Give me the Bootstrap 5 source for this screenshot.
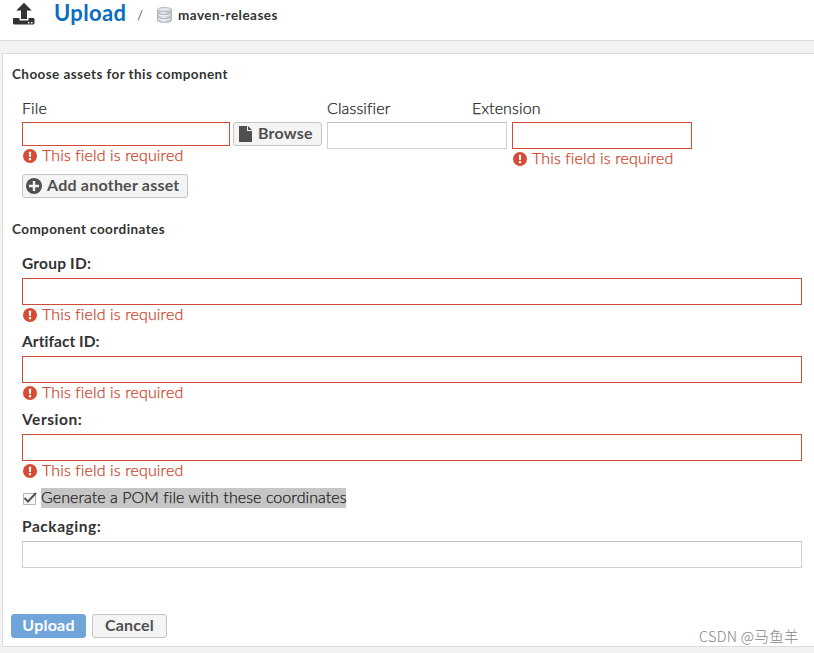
<!DOCTYPE html>
<html lang="en">
<head>
<meta charset="utf-8">
<meta name="viewport" content="width=device-width, initial-scale=1">
<title>Upload</title>
<link href="https://cdn.jsdelivr.net/npm/bootstrap@5.3.0/dist/css/bootstrap.min.css" rel="stylesheet">
<style>
body{background:#f2f2f2;font:300 16px/20px Lato,"Noto Sans CJK SC",sans-serif;letter-spacing:.13px;color:#222;height:653px;overflow:hidden}
.topbar{height:41px;border-bottom:1px solid #dcdcdc;padding-left:12px}
.topbar h1{font:700 22px/26px Lato,sans-serif;letter-spacing:.35px;color:#0b6dc0;width:72px;margin:0 0 0 19px;white-space:nowrap}
.crumb{font:700 13.5px/20px Lato,sans-serif;letter-spacing:.47px;white-space:nowrap;color:#333}
.panel{margin:12px 0 0 2px;height:594px;border:1px solid #dcdcdc;border-right:0;padding:10px 12px 0 9px}
.panel h2{font:700 13.5px/20px Lato,sans-serif;letter-spacing:.42px;margin:0;color:#333}
.fields{padding-left:10px}
.field-label{line-height:18px;padding-bottom:2px;margin:0;display:block}
.field-label:not(.strong),.error span,.selected{-webkit-text-stroke:.25px currentColor}
.field-label.strong{font-weight:700;font-size:15.5px;letter-spacing:.2px;color:#333}
.field-label.wide{letter-spacing:.55px}
.form-control{border:1px solid #d0d0d0;border-top-color:#c0c0c0;border-radius:0;height:27px;min-height:0;padding:2px 6px;font-size:15px}
.form-control.required{border-color:#cf4c35}
.file-input{height:24px;width:208px}
.w180{width:180px}
.error{color:#cc3f28;height:20px;gap:5px;padding-left:1px;white-space:nowrap}
.error span{line-height:18px;padding-bottom:2px}
.btn{height:24px;border:1px solid #c4c4c4;border-radius:3px;background:#f4f4f4;color:#505050;font:700 16px/18px Lato,sans-serif;letter-spacing:.22px;padding:0 0 2px;white-space:nowrap}
.btn svg{position:relative;top:1px}
.btn.upload{width:75px;background:#6fa5d8;border-color:#6fa5d8;color:#fff}
.btn.cancel{width:75px}
.selected{background:#c6c6c6;height:20px;line-height:18px;width:305px;letter-spacing:.07px;white-space:nowrap}
.watermark{position:absolute;left:699px;top:626px;color:#858585;font:300 14.5px/20px "Noto Sans CJK SC",sans-serif;letter-spacing:.3px;white-space:nowrap}
</style>
</head>
<body>
<svg class="d-none">
  <symbol id="alert" viewBox="0 0 14 14"><circle cx="7" cy="7" r="7" fill="#d64b34"/><path d="M5.800 2.700h2.400l-.3 5.300H6.100z M5.900 9h2.200v2.200H5.900z" fill="#fff"/></symbol>
</svg>
<header class="topbar bg-white d-flex">
  <svg class="flex-shrink-0" style="margin-top:2px" width="23" height="23" viewBox="0 0 23 23"><path fill="#333" d="M12 .8l7.700 7.700H15v8.500H9V8.500H4.300zM1 16h6.500v2.500h9V16H21.500l1 1V21.500l-1 1H2l-1-1z"/><path fill="#fff" d="M16 20h1.500v1.500H16zM19 20h1.500v1.500H19z"/></svg>
  <h1>Upload</h1>
  <span class="crumb fw-normal" style="margin:5px 0 0 11px;width:7px;color:#666">/</span>
  <svg class="flex-shrink-0" style="margin:7px 0 0 13px" width="15" height="16" viewBox="0 0 15 16"><defs><linearGradient id="g"><stop stop-color="#b9bfca"/><stop offset=".4" stop-color="#e8ebf0"/><stop offset="1" stop-color="#b2b8c3"/></linearGradient></defs><path d="M.5 2.500v11c0 2.500 14 2.500 14 0v-11z" fill="url(#g)" stroke="#b0b6c0"/><ellipse cx="7.500" cy="2.500" rx="7" ry="2" fill="#e4e7ec" stroke="#b4b9c2"/><path d="M.5 5.800c0 2.300 14 2.300 14 0M.5 10c0 2.300 14 2.300 14 0" fill="none" stroke="#a8aeb9"/><path d="M1 6.800c0 2.300 13 2.300 13 0M1 11c0 2.300 13 2.300 13 0" fill="none" stroke="#f3f5f8"/></svg>
  <span class="crumb" style="margin:5px 0 0 6px">maven-releases</span>
</header>
<main class="panel bg-white">
  <h2>Choose assets for this component</h2>
  <section class="fields" style="margin-top:15px">
    <div class="d-flex"><span class="field-label" style="width:305px">File</span><span class="field-label" style="width:145px">Classifier</span><span class="field-label">Extension</span></div>
    <div class="d-flex" style="margin-top:3px;height:52px">
      <div style="width:211px"><input class="form-control required file-input" aria-label="File"><div class="error d-flex align-items-center"><svg width="14" height="14"><use href="#alert"/></svg><span>This field is required</span></div></div>
      <button class="btn d-flex align-items-center" style="width:89px;padding-left:5px;gap:6px"><svg width="13" height="16" viewBox="0 0 13 16"><path fill="#505050" d="M0 0h8v5h5v11H0zM9 0l4 4H9z"/></svg><span>Browse</span></button>
      <input class="form-control w180" style="margin-left:5px" aria-label="Classifier">
      <div style="margin-left:5px"><input class="form-control required w180" aria-label="Extension"><div class="error d-flex align-items-center"><svg width="14" height="14"><use href="#alert"/></svg><span>This field is required</span></div></div>
    </div>
    <button class="btn d-flex align-items-center" style="width:166px;padding-left:3px;gap:5px"><svg width="16" height="16" viewBox="0 0 16 16"><circle cx="8" cy="8" r="8" fill="#505050"/><path stroke="#f4f4f4" stroke-width="2.400" d="M8 3v10M3 8h10"/></svg><span>Add another asset</span></button>
  </section>
  <h2 style="margin-top:21px">Component coordinates</h2>
  <section class="fields" style="margin-top:15px">
    <label class="field-label strong" for="group">Group ID:</label>
    <input id="group" class="form-control required mt-1">
    <div class="error d-flex align-items-center"><svg width="14" height="14"><use href="#alert"/></svg><span>This field is required</span></div>
    <label class="field-label strong" style="margin-top:7px;letter-spacing:.05px" for="artifact">Artifact ID:</label>
    <input id="artifact" class="form-control required mt-1">
    <div class="error d-flex align-items-center"><svg width="14" height="14"><use href="#alert"/></svg><span>This field is required</span></div>
    <label class="field-label strong wide" style="margin-top:7px" for="version">Version:</label>
    <input id="version" class="form-control required mt-1">
    <div class="error d-flex align-items-center"><svg width="14" height="14"><use href="#alert"/></svg><span>This field is required</span></div>
    <div class="d-flex align-items-center" style="margin-top:7px">
      <svg width="15" height="15" viewBox="0 0 15 15" style="margin-right:4px"><path fill="#f7f7f7" stroke="#b5b5b5" d="M1.500 2.500h12v11h-12z"/><path fill="none" stroke="#555" stroke-width="2" d="M2.500 7l3.500 3.500L14 2"/></svg>
      <span class="selected">Generate a POM file with these coordinates</span>
    </div>
    <label class="field-label strong wide" style="margin-top:9px" for="packaging">Packaging:</label>
    <input id="packaging" class="form-control mt-1">
  </section>
  <div class="d-flex" style="margin-top:46px;margin-left:-1px;gap:6px"><button class="btn upload">Upload</button><button class="btn cancel">Cancel</button></div>
</main>
<div class="watermark">CSDN @马鱼羊</div>
</body>
</html>
